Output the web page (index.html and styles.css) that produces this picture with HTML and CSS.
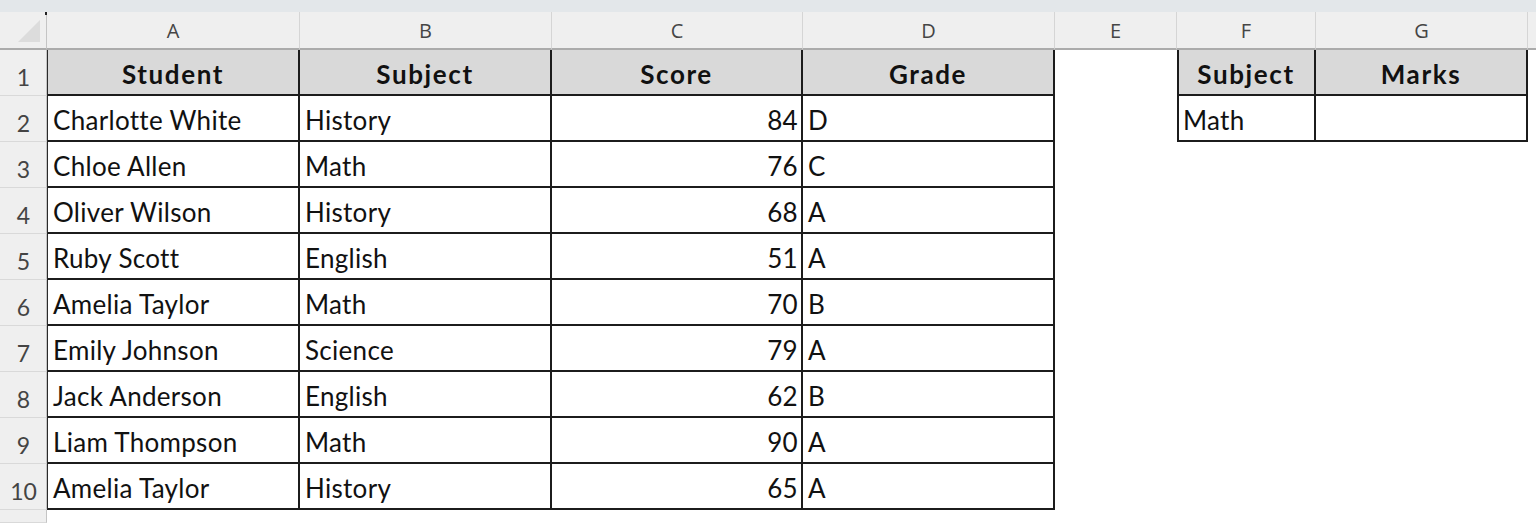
FILE: index.html
```html
<!DOCTYPE html>
<html>
<head>
<meta charset="utf-8">
<link rel="stylesheet" href="styles.css">
</head>
<body>
<div class="topbar"></div>
<div class="sheet">
  <div class="corner"><span class="tri"></span><span class="mark"></span></div>
  <div class="ch">A</div><div class="ch">B</div><div class="ch">C</div><div class="ch">D</div><div class="ch">E</div><div class="ch">F</div><div class="ch">G</div><div class="ch last"></div>

  <div class="rh">1</div>
  <div class="c hd first">Student</div><div class="c hd">Subject</div><div class="c hd">Score</div><div class="c hd">Grade</div>
  <div class="e"></div>
  <div class="c hd fl">Subject</div><div class="c hd">Marks</div><div class="e"></div>

  <div class="rh">2</div>
  <div class="c first">Charlotte White</div><div class="c">History</div><div class="c num">84</div><div class="c">D</div>
  <div class="e"></div>
  <div class="c fl">Math</div><div class="c"></div><div class="e"></div>

  <div class="rh">3</div>
  <div class="c first">Chloe Allen</div><div class="c">Math</div><div class="c num">76</div><div class="c">C</div>
  <div class="e"></div><div class="e"></div><div class="e"></div><div class="e"></div>

  <div class="rh">4</div>
  <div class="c first">Oliver Wilson</div><div class="c">History</div><div class="c num">68</div><div class="c">A</div>
  <div class="e"></div><div class="e"></div><div class="e"></div><div class="e"></div>

  <div class="rh">5</div>
  <div class="c first">Ruby Scott</div><div class="c">English</div><div class="c num">51</div><div class="c">A</div>
  <div class="e"></div><div class="e"></div><div class="e"></div><div class="e"></div>

  <div class="rh">6</div>
  <div class="c first">Amelia Taylor</div><div class="c">Math</div><div class="c num">70</div><div class="c">B</div>
  <div class="e"></div><div class="e"></div><div class="e"></div><div class="e"></div>

  <div class="rh">7</div>
  <div class="c first">Emily Johnson</div><div class="c">Science</div><div class="c num">79</div><div class="c">A</div>
  <div class="e"></div><div class="e"></div><div class="e"></div><div class="e"></div>

  <div class="rh">8</div>
  <div class="c first">Jack Anderson</div><div class="c">English</div><div class="c num">62</div><div class="c">B</div>
  <div class="e"></div><div class="e"></div><div class="e"></div><div class="e"></div>

  <div class="rh">9</div>
  <div class="c first">Liam Thompson</div><div class="c">Math</div><div class="c num">90</div><div class="c">A</div>
  <div class="e"></div><div class="e"></div><div class="e"></div><div class="e"></div>

  <div class="rh">10</div>
  <div class="c first">Amelia Taylor</div><div class="c">History</div><div class="c num">65</div><div class="c">A</div>
  <div class="e"></div><div class="e"></div><div class="e"></div><div class="e"></div>

  <div class="rh"></div>
</div>
</body>
</html>
```

FILE: styles.css
```css
html, body {
  margin: 0;
  padding: 0;
  background: #ffffff;
  overflow: hidden;
}
body {
  width: 1536px;
  height: 523px;
}
.topbar {
  height: 12px;
  background: #e3e7ea;
}
.sheet {
  display: grid;
  grid-template-columns: 47px 253px 252px 251px 252px 122px 139px 212px 8px;
  grid-template-rows: 38px repeat(10, 46px) 13px;
  font-family: Lato, "Liberation Sans", sans-serif;
}
.corner {
  background: #efefef;
  border-right: 1px solid #c4c4c4;
  border-bottom: 2px solid #ababab;
  position: relative;
  box-sizing: border-box;
}
.tri {
  position: absolute;
  left: 18px;
  top: 8px;
  width: 22px;
  height: 22px;
  background: #dcdcdc;
  clip-path: polygon(100% 0, 100% 100%, 0 100%);
}
.mark {
  position: absolute;
  right: -1px;
  top: 0;
  width: 2px;
  height: 3px;
  background: #222;
}
.ch {
  background: #efefef;
  border-right: 1px solid #d5d5d5;
  border-bottom: 2px solid #ababab;
  box-sizing: border-box;
  display: flex;
  align-items: center;
  justify-content: center;
  font-family: "Open Sans", "Noto Sans", sans-serif;
  font-size: 20px;
  color: #454545;
  padding-top: 1px;
}
.ch.last {
  border-right: none;
}
.rh {
  background: #efefef;
  border-right: 1px solid #c4c4c4;
  border-bottom: 1px solid #d9d9d9;
  box-sizing: border-box;
  display: flex;
  align-items: flex-end;
  justify-content: center;
  font-size: 23px;
  line-height: 28px;
  color: #444444;
  padding-bottom: 4px;
  padding-left: 1px;
}
.c {
  box-sizing: border-box;
  border-right: 2px solid #1c1c1c;
  border-bottom: 2px solid #1c1c1c;
  display: flex;
  align-items: flex-end;
  padding: 0 5px 5px 5px;
  font-size: 26px;
  line-height: 30px;
  letter-spacing: 0.3px;
  color: #111111;
  white-space: nowrap;
  overflow: hidden;
}
.c.first {
  border-left: 1px solid #2a2a2a;
  padding-left: 5px;
}
.c.fl {
  border-left: 2px solid #1c1c1c;
  padding-left: 4px;
}
.c.hd {
  background: #d9d9d9;
  font-weight: 700;
  letter-spacing: 1.6px;
  justify-content: center;
}
.c.num {
  justify-content: flex-end;
  padding-right: 3px;
}
.e {
  background: #ffffff;
}
```
